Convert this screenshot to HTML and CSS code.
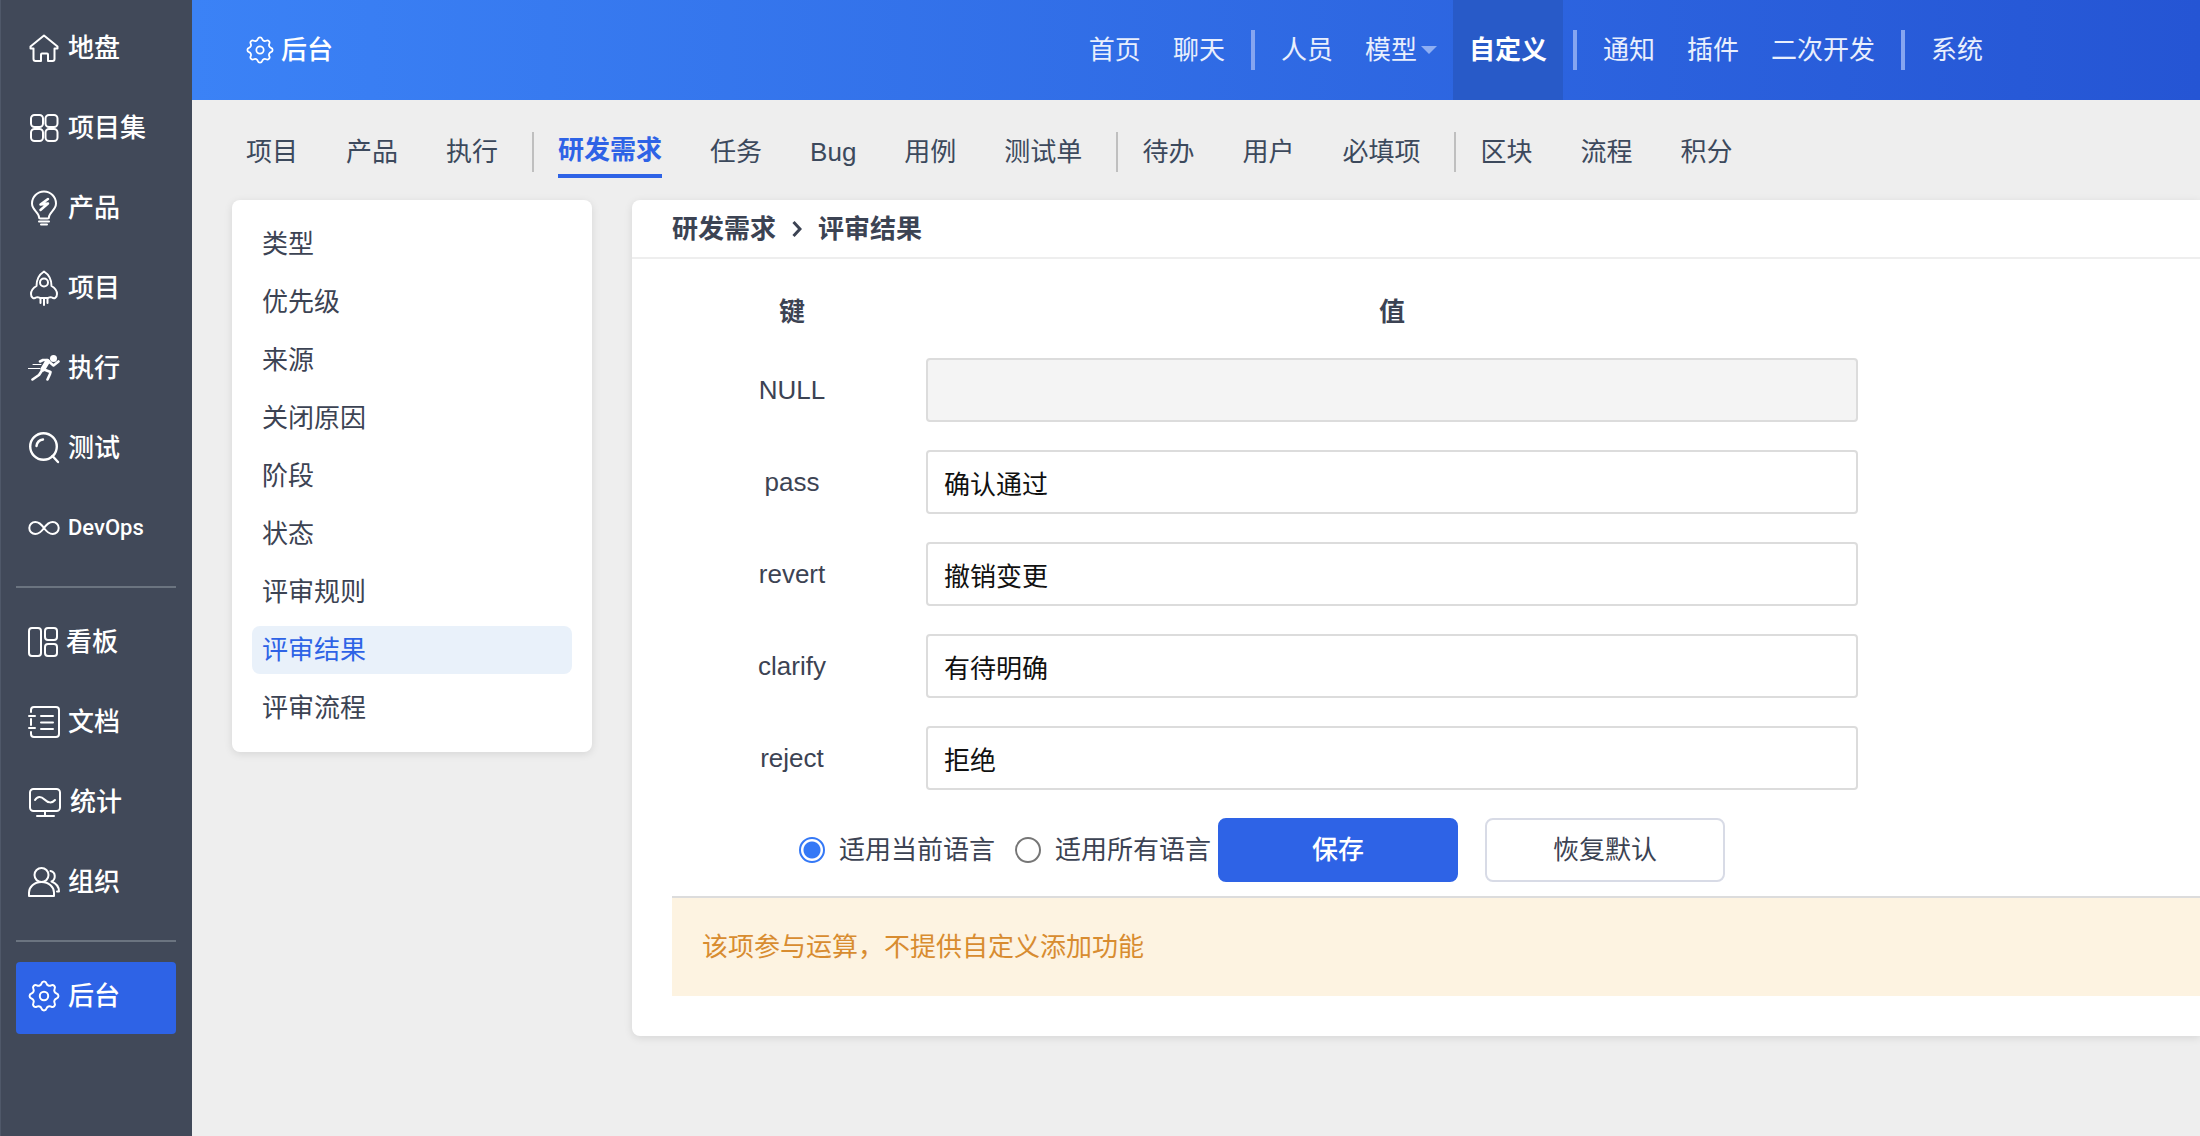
FILE: index.html
```html
<!DOCTYPE html>
<html lang="zh-CN">
    <head>
        <meta charset="utf-8">
        <title>研发需求 - 评审结果</title>
        <link rel="stylesheet" href="styles.css">
    </head>

    <body>
        <svg class="sprite" aria-hidden="true">
            <symbol id="icon-gear" viewBox="0 0 32 32">
                <path d="M28.55 13.5A2.6 2.6 0 0 1 28.55 18.5A3.2 3.2 0 0 0 26.64 23.11A2.6 2.6 0 0 1 23.11 26.64A3.2 3.2 0 0 0 18.5 28.55A2.6 2.6 0 0 1 13.5 28.55A3.2 3.2 0 0 0 8.89 26.64A2.6 2.6 0 0 1 5.36 23.11A3.2 3.2 0 0 0 3.45 18.5A2.6 2.6 0 0 1 3.45 13.5A3.2 3.2 0 0 0 5.36 8.89A2.6 2.6 0 0 1 8.89 5.36A3.2 3.2 0 0 0 13.5 3.45A2.6 2.6 0 0 1 18.5 3.45A3.2 3.2 0 0 0 23.11 5.36A2.6 2.6 0 0 1 26.64 8.89A3.2 3.2 0 0 0 28.55 13.5Z"/>
                <circle cx="16" cy="16" r="4.2"/>
            </symbol>
        </svg>

        <aside class="sidebar">
            <ul class="menu">
                <li><a href="#"><svg width="32" height="32" viewBox="0 0 32 32"><path d="M2.5 14.5L16 3.5L29.5 14.5V16.5H26.5V27a2 2 0 0 1-2 2H20V22.5a1 1 0 0 0-1-1H14a1 1 0 0 0-1 1V29H7.5a2 2 0 0 1-2-2V16.5H2.5Z"/></svg>地盘</a></li>
                <li><a href="#"><svg width="32" height="32" viewBox="0 0 32 32"><rect x="3" y="3" width="12" height="12" rx="3.5"/><rect x="17.5" y="3" width="12" height="12" rx="3.5"/><rect x="3" y="17" width="12" height="12" rx="3.5"/><rect x="17.5" y="17" width="12" height="12" rx="3.5"/></svg>项目集</a></li>
                <li><a href="#"><svg width="32" height="36" viewBox="0 0 32 36"><path d="M11 27C11 22.5 4 20 4 13.5a12 12 0 0 1 24 0C28 20 21 22.5 21 27a1.5 1.5 0 0 1-1.5 1.5h-7A1.5 1.5 0 0 1 11 27Z"/><path d="M11 31.5H21M13 34.5H19"/><path d="M20 9L12.5 14.5L20 13.5L12.5 20" stroke-width="2.5"/></svg>产品</a></li>
                <li><a href="#"><svg width="32" height="36" viewBox="0 0 32 36"><path d="M16 1.5C10.5 5 8.5 10 8.5 16C5 18 3 20.5 3 24C3 28 6 29 8 27.5C9.5 26.5 10 27.5 12 28H20C22 27.5 22.5 26.5 24 27.5C26 29 29 28 29 24C29 20.5 27 18 23.5 16C23.5 10 21.5 5 16 1.5Z"/><circle cx="16" cy="12.5" r="4"/><path d="M12.5 29V33M16 29V35M19.5 29V33"/></svg>项目</a></li>
                <li><a href="#"><svg width="32" height="32" viewBox="0 0 32 32"><circle cx="25.5" cy="6.5" r="3.5" class="solid"/><path d="M19.5 9.5L15 17" stroke-width="5"/><path d="M12 9.5L15 8H19L22 10.5L25.5 13.5L30.5 9.5M15 17L11 23L4.5 27.500M16 17.5L22.500 20L22 22L19.500 27.500" stroke-width="2.6"/><path d="M5 12.5H13M0 16.5H12" stroke-width="1"/></svg>执行</a></li>
                <li><a href="#"><svg width="32" height="32" viewBox="0 0 32 32"><circle cx="15.5" cy="14.5" r="13.3" stroke-width="2.4"/><path d="M8.5 14C9 10.5 11 8 15 7.5M24.5 24L30 30" stroke-width="2.4"/></svg>测试</a></li>
                <li><a href="#" class="latin"><svg width="32" height="32" viewBox="0 0 32 32"><path d="M16 16C12.5 11 9.5 10 7.3 10a6 6 0 0 0 0 12C9.5 22 12.5 21 16 16S22.5 10 24.7 10a6 6 0 0 1 0 12C22.5 22 19.5 21 16 16Z"/></svg>DevOps</a></li>
            </ul>
            <ul class="menu">
                <li><a href="#"><svg width="30" height="32" viewBox="0 0 30 32"><rect x="1" y="2" width="12" height="28" rx="3"/><rect x="17" y="2" width="12" height="12" rx="3"/><rect x="17" y="18" width="12" height="12" rx="3"/></svg>看板</a></li>
                <li><a href="#"><svg width="32" height="32" viewBox="0 0 32 32"><path d="M3 6V4a3 3 0 0 1 3-3H28a3 3 0 0 1 3 3V28a3 3 0 0 1-3 3H6a3 3 0 0 1-3-3V26M3 13V19M1 10H7M1 22H7M13 10H25M13 16.5H25M13 23H25"/></svg>文档</a></li>
                <li><a href="#"><svg width="34" height="32" viewBox="0 0 34 32"><rect x="2" y="3" width="30" height="22" rx="3.5"/><path d="M17 25V30M9 30H26M7 14C9.5 10 13 10 16.5 13.5S24 17.5 27 14"/></svg>统计</a></li>
                <li><a href="#"><svg width="32" height="32" viewBox="0 0 32 32"><circle cx="13.5" cy="9" r="7"/><path d="M1 30V26.5C1 21 6 16 13.5 16S26 21 26 26.5V30ZM22.5 5C28 6 28 13.5 23.5 15.5C28.5 17.5 31 20.5 31 25.5H29"/></svg>组织</a></li>
            </ul>
            <ul class="menu">
                <li><a href="#" class="active"><svg width="32" height="32"><use href="#icon-gear"/></svg>后台</a></li>
            </ul>
        </aside>

        <div class="page">
            <header class="header">
                <a href="#" class="heading"><svg width="28" height="28"><use href="#icon-gear"/></svg>后台</a>
                <nav class="navbar">
                    <a href="#">首页</a>
                    <a href="#">聊天</a>
                    <span class="divider"></span>
                    <a href="#">人员</a>
                    <a href="#">模型<span class="caret"></span></a>
                    <a href="#" class="active">自定义</a>
                    <span class="divider"></span>
                    <a href="#">通知</a>
                    <a href="#">插件</a>
                    <a href="#">二次开发</a>
                    <span class="divider"></span>
                    <a href="#">系统</a>
                </nav>
            </header>

            <nav class="subnav">
                <a href="#">项目</a>
                <a href="#">产品</a>
                <a href="#">执行</a>
                <span class="divider"></span>
                <a href="#" class="active"><span>研发需求</span></a>
                <a href="#">任务</a>
                <a href="#">Bug</a>
                <a href="#">用例</a>
                <a href="#">测试单</a>
                <span class="divider"></span>
                <a href="#">待办</a>
                <a href="#">用户</a>
                <a href="#">必填项</a>
                <span class="divider"></span>
                <a href="#">区块</a>
                <a href="#">流程</a>
                <a href="#">积分</a>
            </nav>

            <div class="content">
                <nav class="side-panel">
                    <a href="#">类型</a>
                    <a href="#">优先级</a>
                    <a href="#">来源</a>
                    <a href="#">关闭原因</a>
                    <a href="#">阶段</a>
                    <a href="#">状态</a>
                    <a href="#">评审规则</a>
                    <a href="#" class="active">评审结果</a>
                    <a href="#">评审流程</a>
                </nav>

                <main class="main-panel">
                    <h1 class="panel-heading">
                        研发需求
                        <svg width="10" height="18" viewBox="0 0 10 18"><path d="M1.5 2L8 9L1.5 16"/></svg>
                        评审结果
                    </h1>

                    <form class="panel-body">
                        <table class="form-table">
                            <thead>
                                <tr><th class="key">键</th><th>值</th></tr>
                            </thead>
                            <tbody>
                                <tr>
                                    <td><label for="value-null">NULL</label></td>
                                    <td><input type="text" id="value-null" readonly></td>
                                </tr>
                                <tr>
                                    <td><label for="value-pass">pass</label></td>
                                    <td><input type="text" id="value-pass" value="确认通过"></td>
                                </tr>
                                <tr>
                                    <td><label for="value-revert">revert</label></td>
                                    <td><input type="text" id="value-revert" value="撤销变更"></td>
                                </tr>
                                <tr>
                                    <td><label for="value-clarify">clarify</label></td>
                                    <td><input type="text" id="value-clarify" value="有待明确"></td>
                                </tr>
                                <tr>
                                    <td><label for="value-reject">reject</label></td>
                                    <td><input type="text" id="value-reject" value="拒绝"></td>
                                </tr>
                            </tbody>
                        </table>

                        <div class="actions">
                            <label><input type="radio" name="lang" checked>适用当前语言</label>
                            <label><input type="radio" name="lang">适用所有语言</label>
                            <button type="submit" class="primary">保存</button>
                            <button type="button">恢复默认</button>
                        </div>

                        <p class="alert">该项参与运算，不提供自定义添加功能</p>
                    </form>
                </main>
            </div>
        </div>
    </body>
</html>
```

FILE: styles.css
```css
* {
    box-sizing: border-box;
}

body {
    display: flex;
    min-height: 100vh;
    margin: 0;
    background: #eee;
    color: #3c4353;
    font: 26px/48px "Liberation Sans", "Noto Sans CJK SC", sans-serif;
}

a {
    color: inherit;
    text-decoration: none;
}

svg {
    flex: none;
    fill: none;
    stroke: currentColor;
    stroke-width: 2;
    stroke-linecap: round;
    stroke-linejoin: round;
}

svg .solid {
    fill: currentColor;
    stroke: none;
}

.sprite {
    position: absolute;
    width: 0;
    height: 0;
}

/* Left sidebar */

.sidebar {
    flex: none;
    width: 192px;
    padding: 14px 16px;
    background: #414959;
    box-shadow: inset 1px 0 #4f5869;
    color: #fff;
    font-weight: 500;
}

.menu {
    display: grid;
    gap: 8px;
    margin: 0;
    padding: 0;
    list-style: none;
}

.menu + .menu {
    margin-top: 20px;
    padding-top: 20px;
    border-top: 2px solid #6b7480;
}

.menu a {
    display: flex;
    align-items: center;
    gap: 8px;
    height: 72px;
    padding: 0 12px 4px;
    border-radius: 4px;
}

.menu .active {
    background: #2e63e6;
}

.menu .latin {
    font-family: Roboto, "Liberation Sans", sans-serif;
    font-size: 22px;
}

/* Top bar */

.page {
    flex: 1;
    min-width: 0;
}

.header {
    display: flex;
    justify-content: space-between;
    height: 100px;
    padding: 0 201px 0 54px;
    background: linear-gradient(90deg, #3b82f6, #2555d4);
    color: #fff;
}

.heading,
.navbar,
.navbar a {
    display: flex;
    align-items: center;
}

.heading {
    gap: 7px;
    font-weight: 500;
}

.navbar a {
    height: 100%;
    padding: 0 16px;
    color: #e9effd;
}

.navbar .active {
    background: #285ac8;
    color: #fff;
    font-weight: bold;
}

.navbar .divider {
    width: 4px;
    height: 40px;
    margin: 0 10px;
    background: #86a5f0;
}

.caret {
    margin-left: 4px;
    border: 8px solid transparent;
    border-top-color: #8eaef3;
    border-bottom: 0;
}

/* Second level navigation */

.subnav {
    display: flex;
    align-items: center;
    height: 100px;
    padding: 4px 30px 0;
    color: #3c495c;
}

.subnav a {
    padding: 0 24px;
}

.subnav .active {
    color: #2e63e6;
    font-weight: bold;
}

.subnav .active span {
    display: block;
    border-bottom: 4px solid;
}

.subnav .divider {
    width: 2px;
    height: 40px;
    margin-left: 10px;
    background: #bfbfbf;
}

/* Panels */

.content {
    display: flex;
    align-items: flex-start;
    gap: 40px;
    padding: 0 0 40px 40px;
}

.side-panel,
.main-panel {
    border-radius: 8px;
    background: #fff;
    box-shadow: 0 2px 8px #0000001a;
}

.side-panel {
    display: grid;
    flex: none;
    gap: 10px;
    width: 360px;
    padding: 20px;
}

.side-panel a {
    padding: 0 10px;
    border-radius: 8px;
}

.side-panel .active {
    background: #e9f1fa;
    color: #2e63e6;
}

.main-panel {
    flex: 1;
    min-width: 0;
    border-radius: 8px 0 0 8px;
}

.panel-heading {
    display: flex;
    align-items: center;
    gap: 16px;
    height: 59px;
    margin: 0;
    padding: 0 40px;
    border-bottom: 2px solid #eee;
    font-size: 26px;
}

.panel-heading svg {
    stroke-width: 3;
    stroke-linecap: butt;
    stroke-linejoin: miter;
}

.panel-body {
    padding: 21px 0 40px 40px;
}

.form-table {
    width: 1200px;
    max-width: 100%;
    border-collapse: collapse;
    table-layout: fixed;
    text-align: center;
}

.form-table .key {
    width: 240px;
}

.form-table th {
    height: 64px;
    padding: 0;
}

.form-table td {
    height: 92px;
    padding: 0 14px;
}

input,
button {
    font: inherit;
}

input[type="text"] {
    display: block;
    width: 100%;
    height: 64px;
    padding: 0 16px;
    border: 2px solid #dcdcdc;
    border-radius: 4px;
    background: #fff;
    color: #111;
}

input[type="text"]:read-only {
    background: #f4f4f4;
}

.actions {
    display: flex;
    align-items: center;
    height: 92px;
    padding-left: 127px;
}

.actions label {
    display: flex;
    align-items: center;
    gap: 14px;
    margin-right: 20px;
}

.actions label + label {
    margin-right: 7px;
}

input[type="radio"] {
    width: 26px;
    height: 26px;
    margin: 0;
    border: 2px solid #767676;
    border-radius: 50%;
    background: #fff;
    appearance: none;
}

input[type="radio"]:checked {
    border-color: #3478f6;
    background: radial-gradient(circle, #3478f6 8px, #fff 9px);
}

button {
    width: 240px;
    height: 64px;
    padding: 0;
    border: 2px solid #d8dbe6;
    border-radius: 8px;
    background: #fff;
    color: #3c4353;
}

button + button {
    margin-left: 27px;
}

.primary {
    border-color: #2e63e6;
    background: #2e63e6;
    color: #fff;
    font-weight: 500;
}

.alert {
    margin: 0;
    padding: 25px 30px;
    border-top: 2px solid #dcdcdc;
    background: #fdf3e1;
    color: #d88c30;
}
```
